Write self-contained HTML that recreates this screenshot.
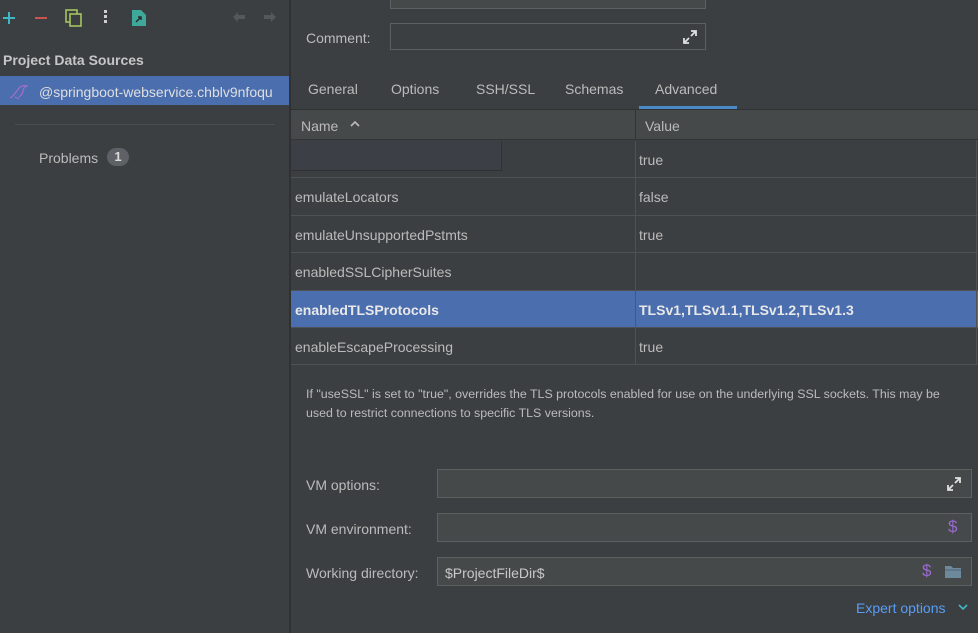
<!DOCTYPE html>
<html><head><meta charset="utf-8"><style>
*{box-sizing:border-box;margin:0;padding:0}
body{width:978px;height:633px;overflow:hidden;background:#3c3f41;font-family:"Liberation Sans",sans-serif;font-size:14px;color:#bbbbbb;position:relative}
.a{position:absolute}
.inp{position:absolute;border:1px solid #5e6060;background:#45494a}
.row{position:absolute;left:291px;width:687px;height:38px;border-bottom:1px solid #4f5254}
.row span{position:absolute;top:11px}
.row .n{left:4px}.row .v{left:348px}
</style></head><body>
<div class="a" style="left:0;top:0;width:290px;height:633px;background:#3c3f41"></div>
<svg class="a" style="left:2px;top:11px" width="14" height="14"><path d="M7 1v12M1 7h12" stroke="#3fb8c5" stroke-width="2"/></svg>
<div class="a" style="left:35px;top:17px;width:12px;height:2px;background:#c75450"></div>
<svg class="a" style="left:65px;top:9px" width="18" height="18"><rect x="1" y="1" width="11" height="12" fill="none" stroke="#a3c55f" stroke-width="1.6"/><rect x="5" y="5" width="11" height="12" fill="#3c3f41" stroke="#a3c55f" stroke-width="1.6"/></svg>
<div class="a" style="left:104px;top:10px;width:3px;height:3px;background:#cfcfcf;box-shadow:0 5px #cfcfcf,0 10px #cfcfcf"></div>
<svg class="a" style="left:131px;top:9px" width="16" height="18"><path d="M1 1h9l5 5v11H1z" fill="#3ea89a"/><path d="M5 13l5-5M7 8h3v3" stroke="#2b2b2b" stroke-width="1.5" fill="none"/></svg>
<svg class="a" style="left:232px;top:11px" width="14" height="12"><path d="M1 6l5-5v3h7v4H6v3z" fill="#55585a"/></svg>
<svg class="a" style="left:263px;top:11px" width="14" height="12"><path d="M13 6L8 1v3H1v4h7v3z" fill="#55585a"/></svg>
<div class="a" style="left:3px;top:52px;font-weight:bold;font-size:14px;color:#c6c6c6">Project Data Sources</div>
<div class="a" style="left:0;top:76px;width:290px;height:29px;background:#4b6eaf"></div>
<svg class="a" style="left:9px;top:84px" width="20" height="16"><path d="M1 14c4-2 6-6 9-10 2-2 5-3 8-2-2 1-4 2-4 5 0 3-3 5-4 6M6 13l4 2" fill="none" stroke="#a66cd1" stroke-width="1.2"/></svg>
<div class="a" style="left:39px;top:84px;font-size:14px;color:#dfdfdf;white-space:nowrap;width:251px;overflow:hidden;text-decoration:underline wavy #a4933a;text-underline-offset:3px;text-decoration-thickness:1px">@springboot-webservice.chblv9nfoqu</div>
<div class="a" style="left:15px;top:124px;width:260px;height:1px;background:#4a4d4f"></div>
<div class="a" style="left:39px;top:150px;font-size:14px">Problems</div>
<div class="a" style="left:107px;top:148px;width:22px;height:18px;border-radius:9px;background:#5e6266;color:#dcdcdc;font-weight:bold;text-align:center;line-height:18px;font-size:13px">1</div>
<div class="a" style="left:289px;top:0;width:2px;height:633px;background:#2f3133"></div>
<div class="inp" style="left:390px;top:-6px;width:316px;height:15px"></div>
<div class="a" style="left:306px;top:30px;font-size:14px">Comment:</div>
<div class="inp" style="left:390px;top:23px;width:316px;height:27px;background:#3c3f41"></div>
<svg class="a" style="left:681px;top:28px" width="18" height="18"><path d="M10 3h5v5M15 3l-5 5M8 15H3v-5M3 15l5-5" stroke="#e0e0e0" stroke-width="1.8" fill="none"/></svg>
<div class="a" style="left:308px;top:81px;font-size:14px">General</div>
<div class="a" style="left:391px;top:81px;font-size:14px">Options</div>
<div class="a" style="left:476px;top:81px;font-size:14px">SSH/SSL</div>
<div class="a" style="left:565px;top:81px;font-size:14px">Schemas</div>
<div class="a" style="left:655px;top:81px;font-size:14px">Advanced</div>
<div class="a" style="left:639px;top:106px;width:98px;height:3px;background:#4a88c7"></div>
<div class="a" style="left:291px;top:109px;width:687px;height:1px;background:#2f3133"></div>
<div class="a" style="left:291px;top:110px;width:687px;height:30px;background:#45494a;border-bottom:1px solid #323436"></div>
<div class="a" style="left:301px;top:118px;font-size:14px">Name</div>
<svg class="a" style="left:349px;top:120px" width="12" height="8"><path d="M2 6l4-4 4 4" stroke="#bbb" stroke-width="1.6" fill="none"/></svg>
<div class="a" style="left:635px;top:110px;width:1px;height:30px;background:#323436"></div>
<div class="a" style="left:645px;top:118px;font-size:14px">Value</div>
<div class="row" style="top:141px;height:37px"><span class="v">true</span></div>
<div class="a" style="left:291px;top:141px;width:211px;height:30px;background:#3c3f46;border:1px solid #2f3133;border-left:none;border-top:none"></div>
<div class="row" style="top:178px"><span class="n">emulateLocators</span><span class="v">false</span></div>
<div class="row" style="top:216px;height:37px"><span class="n">emulateUnsupportedPstmts</span><span class="v">true</span></div>
<div class="row" style="top:253px"><span class="n">enabledSSLCipherSuites</span><span class="v"></span></div>
<div class="row" style="top:291px;height:37px;background:#4b6eaf;color:#e8e8e8;font-weight:bold"><span class="n">enabledTLSProtocols</span><span class="v">TLSv1,TLSv1.1,TLSv1.2,TLSv1.3</span></div>
<div class="row" style="top:328px;height:37px"><span class="n">enableEscapeProcessing</span><span class="v">true</span></div>
<div class="a" style="left:635px;top:141px;width:1px;height:224px;background:#4f5254"></div>
<div class="a" style="left:635px;top:291px;width:1px;height:37px;background:#3b5a8e"></div>
<div class="a" style="left:976px;top:140px;width:1px;height:225px;background:#4f5254"></div>
<div class="a" style="left:306px;top:385px;font-size:12.4px;line-height:19px;width:664px">If "useSSL" is set to "true", overrides the TLS protocols enabled for use on the underlying SSL sockets. This may be used to restrict connections to specific TLS versions.</div>
<div class="a" style="left:306px;top:477px;font-size:14px">VM options:</div>
<div class="inp" style="left:437px;top:469px;width:535px;height:29px"></div>
<svg class="a" style="left:945px;top:475px" width="18" height="18"><path d="M10 3h5v5M15 3l-5 5M8 15H3v-5M3 15l5-5" stroke="#e0e0e0" stroke-width="1.8" fill="none"/></svg>
<div class="a" style="left:306px;top:521px;font-size:14px">VM environment:</div>
<div class="inp" style="left:437px;top:513px;width:535px;height:29px"></div>
<div class="a" style="left:948px;top:517px;font-size:17px;color:#9b6ad3">$</div>
<div class="a" style="left:306px;top:565px;font-size:14px">Working directory:</div>
<div class="inp" style="left:437px;top:557px;width:535px;height:29px"></div>
<div class="a" style="left:445px;top:565px;font-size:14px;color:#c8c8c8">$ProjectFileDir$</div>
<div class="a" style="left:922px;top:561px;font-size:17px;color:#9b6ad3">$</div>
<svg class="a" style="left:944px;top:564px" width="18" height="15"><path d="M1 2h6l2 2h8v10H1z" fill="#6d8a9c"/><path d="M1 6h16" stroke="#4f6677"/></svg>
<div class="a" style="left:856px;top:600px;font-size:14px;color:#589df6">Expert options</div>
<svg class="a" style="left:958px;top:603px" width="10" height="8"><path d="M1 2l4 4 4-4" stroke="#3fb8c5" stroke-width="1.6" fill="none"/></svg>
</body></html>
